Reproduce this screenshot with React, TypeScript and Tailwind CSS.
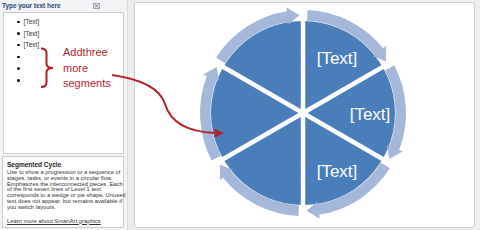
const CX = 303;
const CY = 113;
const R_PIE = 92;
const R_IN = 92.5;
const R_OUT = 103;

function pt(deg: number, r: number) {
  const a = (deg * Math.PI) / 180;
  return `${(CX + r * Math.sin(a)).toFixed(2)},${(CY - r * Math.cos(a)).toFixed(2)}`;
}

function arrowPath(k: number) {
  const a0 = 60 * k + 2.5;
  const a1 = 60 * k + 51;
  const tip = 60 * k + 58;
  const mid = (R_IN + R_OUT) / 2;
  return [
    `M${pt(a0, R_OUT)}`,
    `A${R_OUT} ${R_OUT} 0 0 1 ${pt(a1, R_OUT)}`,
    `L${pt(a1, R_OUT + 4)}`,
    `L${pt(tip, mid)}`,
    `L${pt(a1, R_IN - 2.5)}`,
    `L${pt(a1, R_IN)}`,
    `A${R_IN} ${R_IN} 0 0 0 ${pt(a0, R_IN)}`,
    "Z",
  ].join(" ");
}

const bullets = ["[Text]", "[Text]", "[Text]", "", "", ""];

const description = [
  "Use to show a progression or a sequence of",
  "stages, tasks, or events in a circular flow.",
  "Emphasizes the interconnected pieces. Each",
  "of the first seven lines of Level 1 text",
  "corresponds to a wedge or pie shape. Unused",
  "text does not appear, but remains available if",
  "you switch layouts.",
];

function Diagram() {
  const labels = [
    { x: 337, y: 60 },
    { x: 370, y: 116 },
    { x: 337, y: 173 },
  ];
  return (
    <svg width="341" height="226" viewBox="134 2 341 226" className="block">
      <circle cx={CX} cy={CY} r={R_PIE} fill="#4a7ebb" />
      {[0, 60, 120].map((d) => (
        <line
          key={d}
          x1={pt(d, R_PIE + 2).split(",")[0]}
          y1={pt(d, R_PIE + 2).split(",")[1]}
          x2={pt(d + 180, R_PIE + 2).split(",")[0]}
          y2={pt(d + 180, R_PIE + 2).split(",")[1]}
          stroke="#ffffff"
          strokeWidth="4.5"
        />
      ))}
      {[0, 1, 2, 3, 4, 5].map((k) => (
        <path key={k} d={arrowPath(k)} fill="#a6b8da" />
      ))}
      {labels.map((l, i) => (
        <text
          key={i}
          x={l.x}
          y={l.y}
          fill="#ffffff"
          fontSize="17"
          textAnchor="middle"
          dominantBaseline="middle"
          fontFamily="'Liberation Sans', Arial, sans-serif"
        >
          [Text]
        </text>
      ))}
    </svg>
  );
}

export default function App() {
  return (
    <div className="relative flex h-[230px] w-[480px] overflow-hidden bg-[#efefef] font-['Liberation_Sans',Arial,sans-serif]">
      {/* text pane */}
      <div className="flex w-[127px] flex-col bg-[#f2f3f5] pl-[2px] pr-[3px]">
        <div className="flex h-[12px] items-center justify-between pr-[24px]">
          <span className="text-[6.4px] font-bold leading-none text-[#1f3f73]">Type your text here</span>
          <svg width="7" height="6" viewBox="0 0 7 6">
            <rect x="0.5" y="0.5" width="6" height="5" fill="none" stroke="#8a8f98" strokeWidth="0.8" />
            <path d="M1.5 1.3 L5.5 4.7 M5.5 1.3 L1.5 4.7" stroke="#6b707a" strokeWidth="0.8" />
          </svg>
        </div>
        <div className="ml-[1px] h-[142px] border border-[#c9ccd1] bg-white pt-[3px]">
          <ul className="pl-[13px]">
            {bullets.map((b, i) => (
              <li key={i} className="flex h-[11.7px] items-center gap-[4px] text-[6.6px] text-[#333]">
                <span className="h-[2.5px] w-[2.5px] rounded-full bg-black" />
                <span>{b}</span>
              </li>
            ))}
          </ul>
        </div>
        <div className="mt-[2px] flex h-[72px] flex-col border border-[#c9ccd1] bg-white px-[4px] pt-[4px]">
          <div className="text-[6.5px] font-bold leading-[8px] text-[#222]">Segmented Cycle</div>
          <div className="mt-[1px] text-[5.8px] leading-[5.8px] text-[#333]">
            {description.map((l, i) => (
              <div key={i} className="whitespace-nowrap">
                {l}
              </div>
            ))}
          </div>
          <div className="mt-[7px] whitespace-nowrap text-[5.8px] leading-[6px] text-[#333] underline">
            Learn more about SmartArt graphics
          </div>
        </div>
      </div>
      {/* splitter */}
      <div className="w-[7px] border-l border-[#d8d8d8] bg-[#ececec]" />
      {/* canvas */}
      <div className="mt-[2px] h-[226px] w-[341px] overflow-hidden rounded-[3px] border border-[#cfcfcf] bg-white">
        <div className="-ml-px -mt-px">
          <Diagram />
        </div>
      </div>

      {/* annotation overlay */}
      <svg
        className="pointer-events-none absolute left-0 top-0"
        width="480"
        height="230"
        viewBox="0 0 480 230"
      >
        <path
          d="M41 48.5 Q46.5 48.5 46.5 53 L46.5 63.5 Q46.5 68 53 68 Q46.5 68 46.5 72.5 L46.5 82.5 Q46.5 87 41 87"
          fill="none"
          stroke="#b51f2a"
          strokeWidth="2"
        />
        <path
          d="M112 75 C140 79 160 88 165 104 C171 124 190 132 215 133"
          fill="none"
          stroke="#b51f2a"
          strokeWidth="2"
        />
        <path d="M224 133.2 L214 128.5 L215.5 133 L214 137.5 Z" fill="#b51f2a" />
      </svg>
      <div className="absolute left-[63px] top-[45px] text-[11px] leading-[15.5px] text-[#b51f2a]">
        <div>Addthree</div>
        <div>more</div>
        <div>segments</div>
      </div>
    </div>
  );
}
